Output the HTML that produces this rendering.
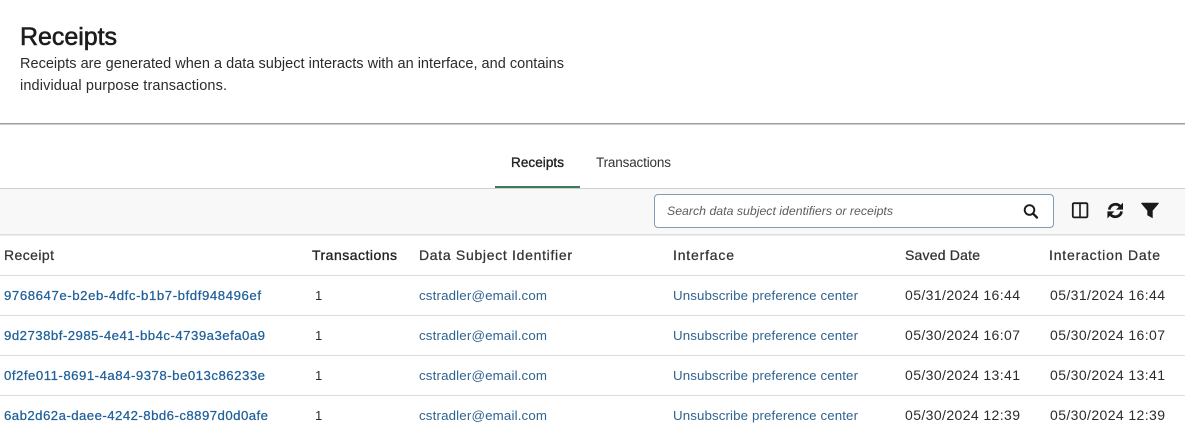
<!DOCTYPE html>
<html lang="en">
<head>
<meta charset="utf-8">
<title>Receipts</title>
<style>
html,body{margin:0;padding:0;background:#fff;width:1185px;height:434px;overflow:hidden}
svg{display:block}
text{font-family:"Liberation Sans",sans-serif;font-size:13px;fill:#2e2e2e}
.h{font-size:14px;fill:#333;stroke:#333;stroke-width:.25px}
.l{font-size:13.3px;fill:#2f6391}
.r{font-size:13.2px;fill:#1f5f99;stroke:#1f5f99;stroke-width:.25px}
.d{font-size:14px;fill:#2b2b2b}
</style>
</head>
<body>
<svg width="1185" height="434" viewBox="0 0 1185 434" xmlns="http://www.w3.org/2000/svg">
<rect width="1185" height="434" fill="#fff"/>
<text x="20" y="45" textLength="97" lengthAdjust="spacing" style="font-size:25px;fill:#1c1c1c;stroke:#1c1c1c;stroke-width:.6px">Receipts</text>
<text x="20" y="68" textLength="544" lengthAdjust="spacing" style="font-size:14.5px;fill:#2b2b2b">Receipts are generated when a data subject interacts with an interface, and contains</text>
<text x="20" y="90" textLength="207" lengthAdjust="spacing" style="font-size:14.5px;fill:#2b2b2b">individual purpose transactions.</text>
<rect x="0" y="123" width="1185" height="1.5" fill="#9e9e9e"/>

<text x="511" y="167" textLength="53" lengthAdjust="spacing" style="font-size:13.5px;fill:#222;stroke:#222;stroke-width:.35px">Receipts</text>
<text x="596" y="167" textLength="75" lengthAdjust="spacing" style="font-size:13.5px;fill:#333">Transactions</text>

<rect x="0" y="189" width="1185" height="45" fill="#f8f8f8"/>
<rect x="0" y="188" width="1185" height="1" fill="#cfcfcf"/>
<rect x="495" y="186" width="85" height="2" fill="#3e7a58"/>
<rect x="0" y="234" width="1185" height="1.5" fill="#dcdcdc"/>

<rect x="654.5" y="194.5" width="399" height="33" rx="3.5" fill="#fff" stroke="#7f9db8"/>
<text x="667" y="215" textLength="226" lengthAdjust="spacing" style="font-size:12.3px;font-style:italic;fill:#5c5c5c">Search data subject identifiers or receipts</text>
<circle cx="1029.5" cy="210" r="4.8" fill="none" stroke="#1a1a1a" stroke-width="1.9"/>
<path d="M1033 213.6L1037 217.6" stroke="#1a1a1a" stroke-width="2.3" stroke-linecap="round"/>

<rect x="1072.8" y="203.2" width="14.6" height="14.2" rx="1.2" fill="none" stroke="#1a1a1a" stroke-width="1.8"/>
<path d="M1080 204v13" stroke="#1a1a1a" stroke-width="1.6"/>

<path d="M1109.2 209.6a6.4 6.4 0 0 1 10.9-3.4" fill="none" stroke="#1a1a1a" stroke-width="2.7"/>
<path d="M1123 202.6v7h-7z" fill="#1a1a1a"/>
<path d="M1121.6 211.4a6.4 6.4 0 0 1-10.9 3.4" fill="none" stroke="#1a1a1a" stroke-width="2.7"/>
<path d="M1107.4 218.4v-7h7z" fill="#1a1a1a"/>

<path d="M1141.8 202.8h16.4c.5 0 .7.5.4.9l-5.9 6.9v7.6l-5.4-2.9v-4.7l-5.9-6.9c-.3-.4-.1-.9.4-.9z" fill="#1a1a1a"/>

<text class="h" x="4" y="260" textLength="50" lengthAdjust="spacing">Receipt</text>
<text class="h" x="312" y="260" textLength="85" lengthAdjust="spacing" style="fill:#222;stroke:#222;stroke-width:.35px">Transactions</text>
<text class="h" x="419" y="260" textLength="153" lengthAdjust="spacing">Data Subject Identifier</text>
<text class="h" x="673" y="260" textLength="61" lengthAdjust="spacing">Interface</text>
<text class="h" x="905" y="260" textLength="75" lengthAdjust="spacing">Saved Date</text>
<text class="h" x="1049" y="260" textLength="111" lengthAdjust="spacing">Interaction Date</text>

<rect y="275" width="1185" height="1" fill="#dcdcdc"/>
<rect y="315" width="1185" height="1" fill="#dcdcdc"/>
<rect y="355" width="1185" height="1" fill="#dcdcdc"/>
<rect y="395" width="1185" height="1" fill="#dcdcdc"/>

<text class="r" x="4" y="300" textLength="257" lengthAdjust="spacing">9768647e-b2eb-4dfc-b1b7-bfdf948496ef</text>
<text x="315" y="300">1</text>
<text class="l" x="419" y="300" textLength="128" lengthAdjust="spacing">cstradler@email.com</text>
<text class="l" x="673" y="300" textLength="185" lengthAdjust="spacing">Unsubscribe preference center</text>
<text class="d" x="905" y="300" textLength="115" lengthAdjust="spacing">05/31/2024 16:44</text>
<text class="d" x="1050" y="300" textLength="115" lengthAdjust="spacing">05/31/2024 16:44</text>

<text class="r" x="4" y="340" textLength="261" lengthAdjust="spacing">9d2738bf-2985-4e41-bb4c-4739a3efa0a9</text>
<text x="315" y="340">1</text>
<text class="l" x="419" y="340" textLength="128" lengthAdjust="spacing">cstradler@email.com</text>
<text class="l" x="673" y="340" textLength="185" lengthAdjust="spacing">Unsubscribe preference center</text>
<text class="d" x="905" y="340" textLength="115" lengthAdjust="spacing">05/30/2024 16:07</text>
<text class="d" x="1050" y="340" textLength="115" lengthAdjust="spacing">05/30/2024 16:07</text>

<text class="r" x="4" y="380" textLength="261" lengthAdjust="spacing">0f2fe011-8691-4a84-9378-be013c86233e</text>
<text x="315" y="380">1</text>
<text class="l" x="419" y="380" textLength="128" lengthAdjust="spacing">cstradler@email.com</text>
<text class="l" x="673" y="380" textLength="185" lengthAdjust="spacing">Unsubscribe preference center</text>
<text class="d" x="905" y="380" textLength="115" lengthAdjust="spacing">05/30/2024 13:41</text>
<text class="d" x="1050" y="380" textLength="115" lengthAdjust="spacing">05/30/2024 13:41</text>

<text class="r" x="4" y="420" textLength="264" lengthAdjust="spacing">6ab2d62a-daee-4242-8bd6-c8897d0d0afe</text>
<text x="315" y="420">1</text>
<text class="l" x="419" y="420" textLength="128" lengthAdjust="spacing">cstradler@email.com</text>
<text class="l" x="673" y="420" textLength="185" lengthAdjust="spacing">Unsubscribe preference center</text>
<text class="d" x="905" y="420" textLength="115" lengthAdjust="spacing">05/30/2024 12:39</text>
<text class="d" x="1050" y="420" textLength="115" lengthAdjust="spacing">05/30/2024 12:39</text>
</svg>
</body>
</html>
